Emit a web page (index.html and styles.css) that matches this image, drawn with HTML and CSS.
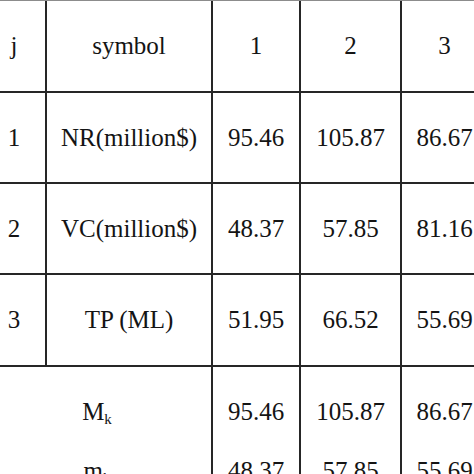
FILE: index.html
```html
<!DOCTYPE html>
<html>
<head>
<meta charset="utf-8">
<link rel="stylesheet" href="styles.css">
</head>
<body>
<div class="frame">
  <table class="grid">
    <colgroup>
      <col class="c-j">
      <col class="c-sym">
      <col class="c-1">
      <col class="c-2">
      <col class="c-3">
    </colgroup>
    <tr class="r-head">
      <td>j</td><td>symbol</td><td>1</td><td>2</td><td>3</td>
    </tr>
    <tr class="r-a">
      <td>1</td><td>NR(million$)</td><td>95.46</td><td>105.87</td><td>86.67</td>
    </tr>
    <tr class="r-b">
      <td>2</td><td>VC(million$)</td><td>48.37</td><td>57.85</td><td>81.16</td>
    </tr>
    <tr class="r-c">
      <td>3</td><td>TP (ML)</td><td>51.95</td><td>66.52</td><td>55.69</td>
    </tr>
    <tr class="r-sum">
      <td colspan="2">M<sub>k</sub></td><td>95.46</td><td>105.87</td><td>86.67</td>
    </tr>
    <tr class="r-sum">
      <td colspan="2">m<sub>k</sub></td><td>48.37</td><td>57.85</td><td>55.69</td>
    </tr>
  </table>
</div>
</body>
</html>
```
FILE: styles.css
```css
html, body {
  margin: 0;
  padding: 0;
  background: #ffffff;
}
.frame {
  width: 474px;
  height: 474px;
  overflow: hidden;
}
.grid {
  margin-left: -17px;
  table-layout: fixed;
  border-collapse: separate;
  border-spacing: 0;
  border-top: 1px solid #8c8c8c;
  width: 506px;
  font-family: "Liberation Serif", "Times New Roman", serif;
  font-size: 25px;
  color: #141414;
}
.c-j { width: 64px; }
.c-sym { width: 166px; }
.c-1 { width: 88px; }
.c-2 { width: 101px; }
.c-3 { width: 87px; }
.grid td {
  padding: 0;
  text-align: center;
  vertical-align: middle;
  border-right: 2px solid #262626;
  border-bottom: 2px solid #262626;
  white-space: nowrap;
  line-height: 28px;
}
.r-head { height: 92px; }
.r-a { height: 91px; }
.r-b { height: 91px; }
.r-c { height: 92px; }
.r-sum { height: 59px; }
.grid .r-sum td {
  border-bottom: none;
  vertical-align: top;
  padding-top: 31px;
}
.grid sub {
  font-size: 15px;
  line-height: 0;
  vertical-align: -4px;
}
```
